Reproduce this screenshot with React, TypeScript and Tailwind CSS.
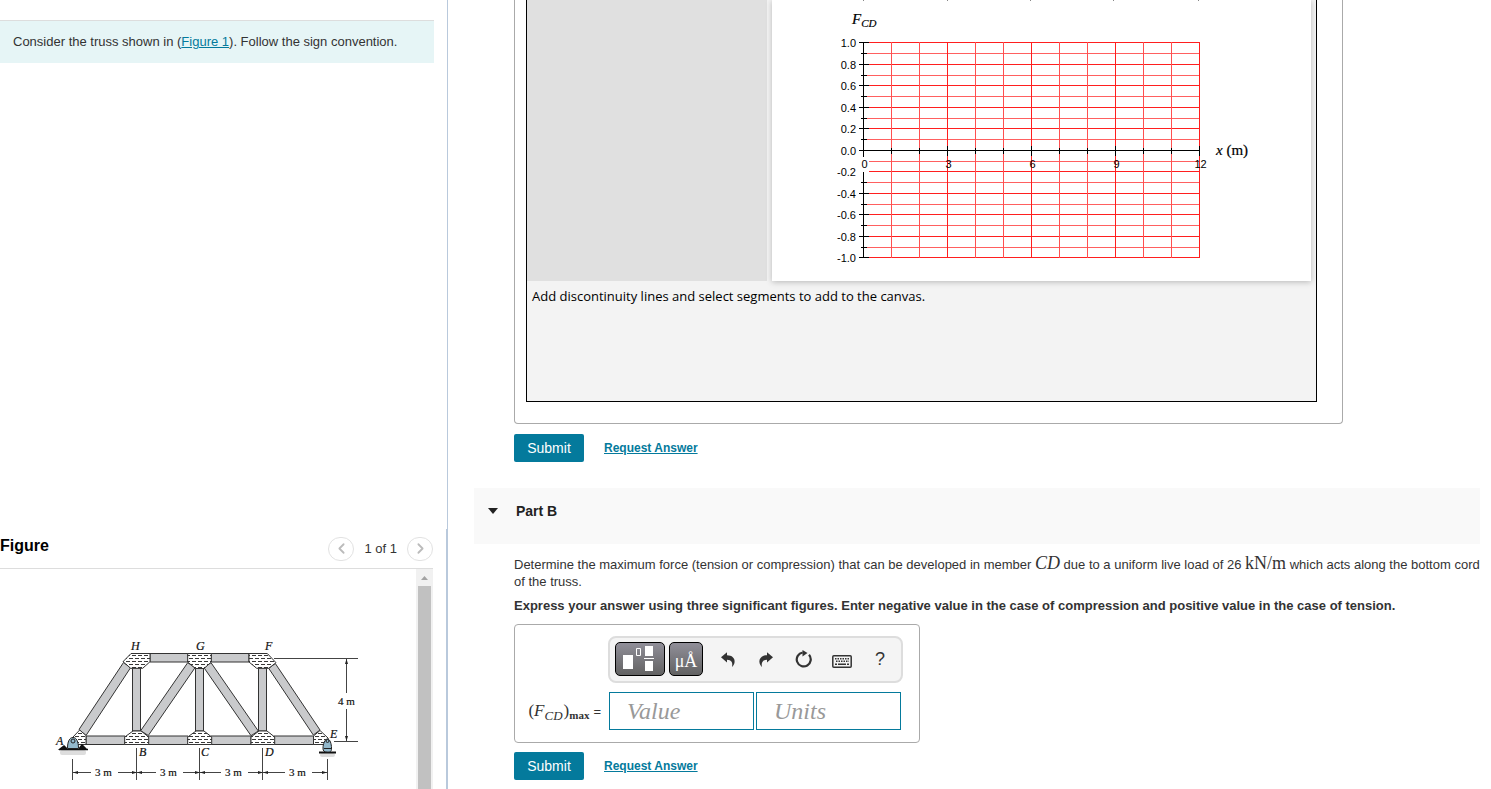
import { ChevronLeft, ChevronRight } from "lucide-react";

const rows = Array.from({ length: 21 }, (_, i) => ({
  y: Math.ceil(42 + i * 10.75) + 0.5,
  value: (1 - i / 10).toFixed(1).replace("-0.0", "0.0"),
  major: i % 2 === 0,
}));

const cols = Array.from({ length: 13 }, (_, i) => ({
  x: 863.5 + i * 28,
  value: i,
  major: i % 3 === 0,
}));

const members = [
  "150,653.5 188,653.5 188,662 150,662",
  "211,653.5 249,653.5 249,662 211,662",
  "86,736 125,736 125,744.5 86,744.5",
  "148,736 188,736 188,744.5 148,744.5",
  "211,736 251,736 251,744.5 211,744.5",
  "274,736 314,736 314,744.5 274,744.5",
  "132.5,668 140.5,668 140.5,731 132.5,731",
  "195.5,668 203.5,668 203.5,731 195.5,731",
  "258.5,668 266.5,668 266.5,731 258.5,731",
  "79,729.5 123.5,662.5 130.7,667.5 86,735.5",
  "140.7,730.7 187.7,662.7 195,667.7 148.3,735.5",
  "204,667.7 211,662.7 258.3,731 251,735.7",
  "268.7,668.3 275.3,663.5 320,730 313.3,735",
];

const gussets = [
  "131,653.5 150,653.5 150,661.7 142.7,668.3 130.7,668.3 123,661.7",
  "187.7,653.5 211.3,653.5 211.3,662 204,668.5 195.5,668.5 187.7,662",
  "249,653.5 267.3,653.5 276,662.7 268.7,668.3 256.7,668.3 249,662",
  "73,737 79.7,730 86,735.5 86,744.5 73,744.5",
  "124.7,737 133,731 141,731 148.7,737 148.7,744.5 124.7,744.5",
  "187.7,737 196,731 204,731 211.7,737 211.7,744.5 187.7,744.5",
  "251,737 259,731 267,731 274.7,737 274.7,744.5 251,744.5",
  "313.5,736 320,730.5 328,738 329,744.5 313.5,744.5",
];

const joints = [
  { name: "H", x: 131, y: 650 },
  { name: "G", x: 196, y: 650 },
  { name: "F", x: 265, y: 650 },
  { name: "A", x: 56, y: 745 },
  { name: "B", x: 139, y: 756 },
  { name: "C", x: 201, y: 756 },
  { name: "D", x: 265, y: 756 },
  { name: "E", x: 330, y: 738 },
];

const bays = [
  { from: 73, to: 137, text: 95 },
  { from: 137, to: 200, text: 160 },
  { from: 200, to: 263, text: 225 },
  { from: 263, to: 327, text: 289 },
];

function InfluenceChart() {
  return (
    <svg width="539" height="281" viewBox="772 0 539 281" role="img" aria-label="Influence line">
      {/* bottom ticks of the graph above */}
      <path d="M863.5 0v1M947.5 0v1M1030.5 0v1M1113.5 0v1M1198.5 0v1" stroke="#888" />

      {rows.map((r) => (
        <path
          key={r.value}
          d={`M${r.major || r.value === "-0.1" ? 869 : 867} ${r.y}H1200`}
          stroke={r.major ? "#ff1f1f" : "#ff6060"}
        />
      ))}
      {cols.slice(1).map((c) => (
        <path
          key={c.value}
          d={`M${c.x} 42V258`}
          stroke={c.major ? "#ff1f1f" : "#ff5050"}
        />
      ))}

      {/* axes, broken behind the origin label */}
      <path d="M863.5 42V157M863.5 172V258M859 150.5H1200" stroke="#000" />
      {rows
        .filter((r) => r.value !== "-0.1" && r.value !== "-0.2")
        .map((r) => (
          <path
            key={r.value}
            d={r.major ? `M859 ${r.y}H869` : `M861 ${r.y}H867`}
            stroke="#000"
          />
        ))}
      {cols.map((c) => (
        <path
          key={c.value}
          d={c.major ? `M${c.x} 146V156` : `M${c.x} 148V154`}
          stroke="#000"
        />
      ))}

      <g fontFamily="Liberation Sans, Arial, sans-serif" fontSize="11">
        {rows
          .filter((r) => r.major)
          .map((r) => (
            <text key={r.value} x="856" y={r.y + 4.5} textAnchor="end">
              {r.value}
            </text>
          ))}
        {cols
          .filter((c) => c.major)
          .map((c) => (
            <text key={c.value} x={c.x + 1} y="168" textAnchor="middle">
              {c.value}
            </text>
          ))}
      </g>
      <g fontFamily="Liberation Serif, Times New Roman, serif" fontSize="15" stroke="#000" strokeWidth="0.2">
        <text x="852" y="24" fontStyle="italic">
          F
          <tspan dy="3" fontSize="11">
            CD
          </tspan>
        </text>
        <text x="1216" y="155">
          <tspan fontStyle="italic">x</tspan> (m)
        </text>
      </g>
    </svg>
  );
}

function Truss() {
  return (
    <svg width="416" height="220" viewBox="0 569 416 220" role="img" aria-label="Truss">
      <defs>
        <pattern id="plate" width="6" height="6" patternUnits="userSpaceOnUse">
          <rect width="6" height="6" fill="#fff" />
          <path d="M0 1.5h4M3 4.5h3M0 4.5h1" stroke="#222" strokeWidth="0.9" />
        </pattern>
      </defs>
      <g fill="#c9cacc" stroke="#333" strokeWidth="1">
        {members.map((points) => (
          <polygon key={points} points={points} />
        ))}
      </g>
      <g fill="url(#plate)" stroke="#333" strokeWidth="1">
        {gussets.map((points) => (
          <polygon key={points} points={points} />
        ))}
      </g>

      {/* pin support */}
      <rect x="60" y="750" width="26" height="5" rx="2" fill="#ddd" />
      <path d="M59 749.5h29M60 749l4-3 3 3zM79 749l3-4 4 4z" fill="#111" stroke="#111" strokeWidth="1.5" />
      <path d="M67.500 748.500c0-7 2-11 5.500-11s5.500 4 5.500 11z" fill="#93b9cc" stroke="#222" />
      <circle cx="73" cy="741" r="2" fill="#93b9cc" stroke="#222" />
      {/* rocker support */}
      <rect x="320" y="753" width="15" height="4" rx="2" fill="#ddd" />
      <path d="M319 752.500h17" stroke="#111" strokeWidth="2" />
      <path d="M323 748c0-4 2-9 4.500-9s4 5 4 9-1 4-4.300 4-4.200-1-4.200-4z" fill="#93b9cc" stroke="#222" />
      <path d="M324 748.500h7" stroke="#222" />
      <circle cx="327.500" cy="741" r="1.500" fill="#93b9cc" stroke="#222" />

      <path
        d="M72.500 759v21M136.500 748v32M199.500 748v32M262.500 748v32M327.500 759v21M274 658.500h84M334 741.500h24M346.500 659v34M346.500 709v32"
        stroke="#444"
      />
      <path d="M346.500 659l-1.500 5h3zM346.500 741l-1.500-5h3z" fill="#222" />
      {bays.map((b) => (
        <g key={b.from}>
          <path d={`M${b.from} 772.500H${b.text - 4}M${b.text + 23} 772.500H${b.to}`} stroke="#444" />
          <path
            d={`M${b.from} 772.500l5-1.500v3zM${b.to} 772.500l-5-1.500v3z`}
            fill="#222"
          />
        </g>
      ))}

      <g fontFamily="Liberation Serif, Times New Roman, serif" fill="#111" stroke="#111" strokeWidth="0.2">
        <g fontSize="11">
          {bays.map((b) => (
            <text key={b.from} x={b.text} y="776">
              3 m
            </text>
          ))}
          <text x="338" y="705">
            4 m
          </text>
        </g>
        <g fontSize="12" fontStyle="italic">
          {joints.map((j) => (
            <text key={j.name} x={j.x} y={j.y}>
              {j.name}
            </text>
          ))}
        </g>
      </g>
    </svg>
  );
}

function SubmitRow() {
  return (
    <div className="flex items-center gap-5">
      <button
        type="button"
        className="h-7 w-[70px] rounded-xs bg-[#047a9c] text-sm text-white"
      >
        Submit
      </button>
      <a href="#request" className="pb-px text-xs font-bold text-[#047a9c] underline">
        Request Answer
      </a>
    </div>
  );
}

function UndoIcon() {
  return (
    <svg width="14" height="15" viewBox="0 0 14 15" fill="#333" aria-hidden="true">
      <path d="M0 5.200 6 .2v3.100c5 0 8 2.900 7.600 6.700-.2 2-1.200 3.600-2.600 5C12 10.800 10.500 7.800 6 7.800v2.800z" />
    </svg>
  );
}

function ResetIcon() {
  return (
    <svg width="18" height="18" viewBox="0 0 18 18" aria-hidden="true">
      <path d="M14 4.800a7 7 0 1 1-6.300-2.300" fill="none" stroke="#333" strokeWidth="2.200" />
      <path d="M7.500 0v6.500L12.500 3z" fill="#333" />
    </svg>
  );
}

function KeyboardIcon() {
  return (
    <svg width="20" height="13" viewBox="0 0 20 13" aria-hidden="true">
      <rect x="0.800" y="0.800" width="18.400" height="11.400" rx="1" fill="none" stroke="#333" strokeWidth="1.500" />
      <path d="M3 3.800h14M4 6.300h13" stroke="#333" strokeWidth="1.500" strokeDasharray="1.500 1" />
      <path d="M3 9.300h2M6 9.300h8M15 9.300h2" stroke="#333" strokeWidth="1.500" />
    </svg>
  );
}

const toolClass = "flex h-[34px] w-[38px] items-center justify-center";
const darkToolClass =
  "flex h-[34px] items-center justify-center rounded-[5px] border border-black bg-linear-to-b from-[#918f99] to-[#626262]";
const pagerClass =
  "flex h-6 w-[26px] items-center justify-center rounded-full border border-[#e2e2e2] text-[#bbb]";
const fieldClass =
  "h-[38px] w-[145px] border border-[#047a9c] bg-white px-[17px] font-['Liberation_Serif',serif] text-2xl italic text-[#333] placeholder:text-[#999]";

export default function App() {
  return (
    <div className="flex h-screen overflow-hidden bg-white font-['Liberation_Sans',Arial,sans-serif] text-[13px] text-[#333]">
      <aside className="flex w-112 shrink-0 flex-col">
        <div className="flex-1 border-r border-[#b9c9dc] pt-5 pr-[13px]">
          <p className="border-t border-[#ddd] bg-[#e6f5f6] px-[13px] py-3 leading-[18px]">
            Consider the truss shown in (
            <a href="#figure" className="text-[#047a9c] underline">
              Figure 1
            </a>
            ). Follow the sign convention.
          </p>
        </div>

        {/* figure panel */}
        <section id="figure" className="flex h-[260px] flex-col border-r-2 border-[#b9c9dc] pr-[13px]">
          <div className="flex h-10 items-center justify-between border-b border-[#ddd]">
            <h2 className="pb-1.5 text-base font-bold text-black">Figure</h2>
            <div className="flex items-center gap-[10px]">
              <button type="button" aria-label="Previous figure" className={pagerClass}>
                <ChevronLeft size={17} strokeWidth={2.5} />
              </button>
              <span className="pt-px">1 of 1</span>
              <button type="button" aria-label="Next figure" className={pagerClass}>
                <ChevronRight size={17} strokeWidth={2.5} />
              </button>
            </div>
          </div>
          <div className="flex min-h-0 flex-1">
            <div className="min-w-0 flex-1">
              <Truss />
            </div>
            <div className="flex w-[17px] shrink-0 flex-col items-center bg-[#f1f1f1]">
              <svg width="17" height="17" viewBox="0 0 17 17" aria-hidden="true">
                <path d="M5 11h7L8.500 7z" fill="#a3a3a3" />
              </svg>
              <div className="w-[13px] flex-1 bg-[#c1c1c1]" />
            </div>
          </div>
        </section>
      </aside>

      <main className="min-w-0 flex-1 pr-[11px] pl-[26px]">
        <div className="pl-10">
          <div className="w-[829px] rounded-b border border-t-0 border-[#aaa] pr-[25px] pb-[21px] pl-[11px]">
            <div className="border border-t-0 border-black bg-[#f3f3f3]">
              <div className="flex gap-[5px] pr-[5px]">
                <div className="flex-1 bg-[#e0e0e0]" />
                <div className="bg-white shadow-[0_1px_6px_rgba(0,0,0,0.25)]">
                  <InfluenceChart />
                </div>
              </div>
              <p className="h-[120px] px-[5px] pt-[5px] font-['Open_Sans','Noto_Sans',sans-serif] text-[13px] leading-5 text-black">
                Add discontinuity lines and select segments to add to the canvas.
              </p>
            </div>
          </div>
          <div className="pt-[10px]">
            <SubmitRow />
          </div>
        </div>

        <button
          type="button"
          className="mt-[26px] flex h-14 w-full items-center gap-[18px] bg-[#f9f9f9] px-[14px] pb-[10px] text-sm font-bold text-[#222]"
        >
          <svg width="10" height="6" viewBox="0 0 10 6" aria-hidden="true">
            <path d="M0 0h10L5 6z" fill="#222" />
          </svg>
          Part B
        </button>

        <div className="pt-[10px] pl-10">
          <p className="leading-[17px]">
            Determine the maximum force (tension or compression) that can be developed in member{" "}
            <i className="font-['Liberation_Serif',serif] text-lg leading-none">CD</i> due to a
            uniform live load of 26{" "}
            <span className="font-['Liberation_Serif',serif] text-lg leading-none">kN/m</span> which
            acts along the bottom cord of the truss.
          </p>
          <p className="mt-[7px] leading-[17px] font-bold">
            Express your answer using three significant figures. Enter negative value in the case of
            compression and positive value in the case of tension.
          </p>

          <div className="mt-[10px] mb-[9px] flex w-[406px] flex-col items-end rounded border border-[#aaa] pt-[11px] pr-4 pb-3">
            <div className="flex h-[47px] w-[295px] items-start gap-1 rounded-lg border-2 border-[#ddd] bg-[#f4f4f4] pt-1 pl-[5px]">
              <button type="button" aria-label="Templates" className={`${darkToolClass} w-[50px]`}>
                <svg width="34" height="26" viewBox="0 0 34 26" fill="#fff" aria-hidden="true">
                  <path d="M0 9h10v14H0zM22 0h8v10h-8zM21 12h10v1H21zM22 15h8v10h-8z" />
                  <path d="M13.500 2.500h4v7h-4z" fill="none" stroke="#fff" />
                </svg>
              </button>
              <button
                type="button"
                aria-label="Units"
                className={`${darkToolClass} w-[34px] pt-1 font-['Liberation_Serif',serif] text-lg text-white`}
              >
                μÅ
              </button>
              <div className="ml-[2px] flex">
                <button type="button" aria-label="Undo" className={toolClass}>
                  <UndoIcon />
                </button>
                <button type="button" aria-label="Redo" className={`${toolClass} -scale-x-100`}>
                  <UndoIcon />
                </button>
                <button type="button" aria-label="Reset" className={toolClass}>
                  <ResetIcon />
                </button>
                <button type="button" aria-label="Keyboard" className={`${toolClass} pt-1`}>
                  <KeyboardIcon />
                </button>
                <button type="button" aria-label="Help" className={`${toolClass} text-lg`}>
                  ?
                </button>
              </div>
            </div>
            <div className="mt-[9px] flex items-center gap-[2px] pr-[2px]">
              <label
                htmlFor="value"
                className="mr-[6px] flex items-baseline font-['Liberation_Serif',serif] text-[17px] whitespace-nowrap"
              >
                (<i>F</i>
                <sub className="text-[13px] italic">CD</sub>
                <span className="ml-px">)</span>
                <sub className="text-[11px] font-bold">max</sub>
                <span className="ml-1 font-['Liberation_Sans',sans-serif] text-[13px]">=</span>
              </label>
              <input id="value" placeholder="Value" className={fieldClass} />
              <input aria-label="Units" placeholder="Units" className={fieldClass} />
            </div>
          </div>
          <SubmitRow />
        </div>
      </main>
    </div>
  );
}
